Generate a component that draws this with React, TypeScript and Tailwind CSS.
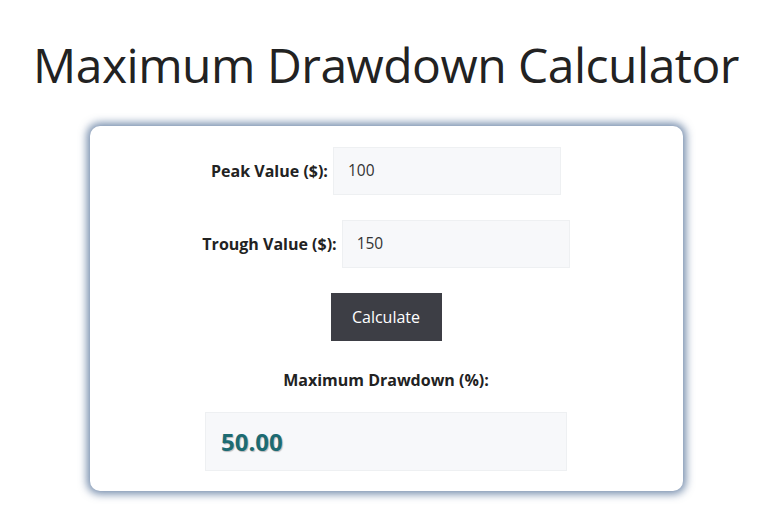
import React from "react";

export default function App() {
  return (
    <div
      className="min-h-[520px] w-full bg-white flex flex-col items-center"
      style={{ fontFamily: '"Open Sans", "Noto Sans", sans-serif' }}
    >
      <h1 className="mt-[33px] text-[48px] leading-[64px] font-normal text-[#222] tracking-[-0.5px]">
        Maximum Drawdown Calculator
      </h1>
      <div className="mt-[29px] w-[593px] rounded-[10px] bg-white shadow-[0_0_9px_3px_rgba(80,110,150,0.8)] flex flex-col items-center pt-[21px] pb-[20px]">
        <div className="flex items-center gap-[5px]">
          <label className="text-[16px] font-bold text-[#222]">Peak Value ($):</label>
          <div className="w-[228px] h-[48px] bg-[#f7f8fa] border border-[#eef0f2] flex items-center px-[14px] text-[15.5px] text-[#333]">
            100
          </div>
        </div>
        <div className="mt-[25px] flex items-center gap-[5px]">
          <label className="text-[16px] font-bold text-[#222]">Trough Value ($):</label>
          <div className="w-[228px] h-[48px] bg-[#f7f8fa] border border-[#eef0f2] flex items-center px-[14px] text-[15.5px] text-[#333]">
            150
          </div>
        </div>
        <button className="mt-[25px] w-[111px] h-[48px] bg-[#3d3e45] text-white text-[16px]">
          Calculate
        </button>
        <div className="mt-[27px] text-[16px] font-bold text-[#222]">Maximum Drawdown (%):</div>
        <div className="mt-[20px] w-[362px] h-[59px] bg-[#f7f8fa] border border-[#eef0f2] flex items-center px-[15px]">
          <span
            className="text-[24px] font-bold text-[#1c6b72]"
            style={{ textShadow: "1px 1px 1px rgba(0,0,0,0.25)" }}
          >
            50.00
          </span>
        </div>
      </div>
    </div>
  );
}
